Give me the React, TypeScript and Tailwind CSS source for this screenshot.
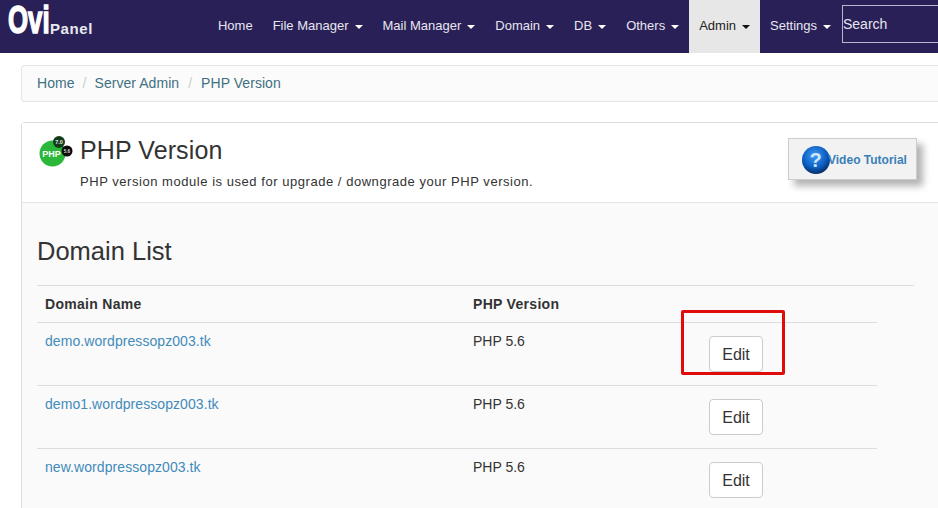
const navItems = [
  { label: 'Home' },
  { label: 'File Manager', caret: true },
  { label: 'Mail Manager', caret: true },
  { label: 'Domain', caret: true },
  { label: 'DB', caret: true },
  { label: 'Others', caret: true },
  { label: 'Admin', caret: true, active: true },
  { label: 'Settings', caret: true },
];

const domains = ['demo.wordpressopz003.tk', 'demo1.wordpressopz003.tk', 'new.wordpressopz003.tk'];

function PhpIcon() {
  return (
    <svg width="36" height="32" viewBox="0 0 36 32" className="shrink-0">
      <circle cx="14.5" cy="17.5" r="13" fill="#2bb83a" />
      <text x="13.5" y="21" textAnchor="middle" fontSize="9" fontWeight="700" fill="#fff" fontFamily="Liberation Sans, sans-serif">PHP</text>
      <circle cx="21" cy="6" r="6" fill="#123d1c" />
      <text x="21" y="8" textAnchor="middle" fontSize="5.5" fontWeight="700" fill="#e5e5e5" fontFamily="Liberation Sans, sans-serif">7.0</text>
      <circle cx="29" cy="15" r="5.5" fill="#0b0b0b" />
      <text x="29" y="17" textAnchor="middle" fontSize="4.5" fontWeight="700" fill="#ddd" fontFamily="Liberation Sans, sans-serif">5.6</text>
    </svg>
  );
}

function HelpIcon() {
  return (
    <svg width="30" height="30" viewBox="0 0 30 30" className="shrink-0">
      <defs>
        <radialGradient id="help" cx="45%" cy="35%" r="70%">
          <stop offset="0%" stopColor="#3f9bf0" />
          <stop offset="60%" stopColor="#0c5fc4" />
          <stop offset="100%" stopColor="#06234f" />
        </radialGradient>
      </defs>
      <circle cx="15" cy="15" r="14" fill="url(#help)" />
      <text x="14.5" y="22" textAnchor="middle" fontSize="20" fontWeight="700" fill="#cfe6fb" fontFamily="Liberation Sans, sans-serif">?</text>
    </svg>
  );
}

export default function App() {
  return (
    <div className="relative h-[508px] w-[938px] overflow-hidden bg-white font-['Liberation_Sans',Arial,sans-serif] text-[14px] text-[#333]">
      {/* Navbar */}
      <nav className="flex h-[53px] items-stretch justify-between bg-[#2a2058]">
        <div className="flex items-start pl-[8px] pt-[1px]">
          <span className="inline-block w-[42px] origin-left scale-x-[0.68] text-[38px] leading-[38px] font-bold whitespace-nowrap text-white [-webkit-text-stroke:1.5px_white]">Ovi</span>
          <span className="mt-[19px] text-[15px] leading-[18px] font-bold tracking-[0.6px] text-[#e8e8ef]">Panel</span>
        </div>
        <div className="flex items-stretch">
          <ul className="flex items-stretch">
            {navItems.map((item) => (
              <li
                key={item.label}
                className={`flex items-center px-[10px] pb-[2px] text-[13px] whitespace-nowrap last:pr-[11px] ${item.active ? 'bg-[#e7e7e7] text-[#222]' : 'text-[#e6e6ee]'}`}
              >
                {item.label}
                {item.caret && (
                  <span className={`ml-[6px] mt-[2px] h-0 w-0 border-x-4 border-t-4 border-x-transparent ${item.active ? 'border-t-[#111]' : 'border-t-white'}`} />
                )}
              </li>
            ))}
          </ul>
          <div className="flex w-[96px] items-start pt-[5px]">
            <div className="flex h-[38px] w-full items-center border border-r-0 border-[#b9b5d0] text-[14px] text-[#e6e6ee]">Search</div>
          </div>
        </div>
      </nav>

      {/* Breadcrumb */}
      <div className="mt-[12px] ml-[21px] flex h-[37px] items-center rounded-l-[4px] border border-r-0 border-[#e5e5e5] bg-[#fbfbfb] pl-[15px] tracking-[0.05px] text-[#3f7082]">
        <span>Home</span>
        <span className="px-[8px] text-[#ccc]">/</span>
        <span>Server Admin</span>
        <span className="px-[9px] text-[#ccc]">/</span>
        <span>PHP Version</span>
      </div>

      {/* Panel */}
      <div className="mt-[20px] ml-[21px] rounded-tl-[4px] border-t border-l border-[#ddd]">
        <div className="relative h-[80px] border-b border-[#e5e5e5] bg-white">
          <div className="flex items-start pt-[13px] pl-[16px]">
            <PhpIcon />
            <div className="ml-[6px]">
              <h1 className="-mt-[1px] text-[25px] leading-[30px] tracking-[0.1px] text-[#333]">PHP Version</h1>
              <p className="mt-[8px] text-[13px] leading-[18px] tracking-[0.54px] text-[#333]">
                PHP version module is used for upgrade / downgrade your PHP version.
              </p>
            </div>
          </div>
          <div className="absolute top-[15px] left-[766px] flex h-[42px] w-[129px] items-center border border-[#ccc] bg-[#f2f2f2] pl-[12px] pt-[1px] shadow-[6px_6px_7px_rgba(0,0,0,0.3)]">
            <HelpIcon />
            <span className="-ml-[3px] text-[12px] font-bold whitespace-nowrap text-[#3a7fb8]">Video Tutorial</span>
          </div>
        </div>

        <div className="bg-[#fafafa] pt-[33px] pl-[15px]">
          <h2 className="text-[25.5px] leading-[30px] text-[#333]">Domain List</h2>
          <div className="mt-[19px] grid h-[37px] w-[877px] grid-cols-[428px_236px_1fr] items-center border-t border-[#ddd] pl-[8px] font-bold text-[#333]">
            <span className="tracking-[0.3px]">Domain Name</span>
            <span className="tracking-[0.3px]">PHP Version</span>
          </div>
          <div className="w-[840px]">
            {domains.map((d) => (
              <div key={d} className="grid h-[63px] grid-cols-[428px_236px_1fr] border-t border-[#ddd] pt-[9px] pl-[8px]">
                <a className="leading-[18px] tracking-[0.07px] text-[#428bba]">{d}</a>
                <span className="leading-[18px]">PHP 5.6</span>
                <button className="mt-[4px] h-[36px] w-[54px] rounded-[4px] border border-[#ccc] bg-white pt-[1px] text-[16px] text-[#333]">Edit</button>
              </div>
            ))}
          </div>
        </div>
      </div>

      {/* Red highlight */}
      <div className="absolute top-[310px] left-[681px] h-[65px] w-[104px] rounded-[2px] border-[3px] border-[#e00b0b]" />
    </div>
  );
}
